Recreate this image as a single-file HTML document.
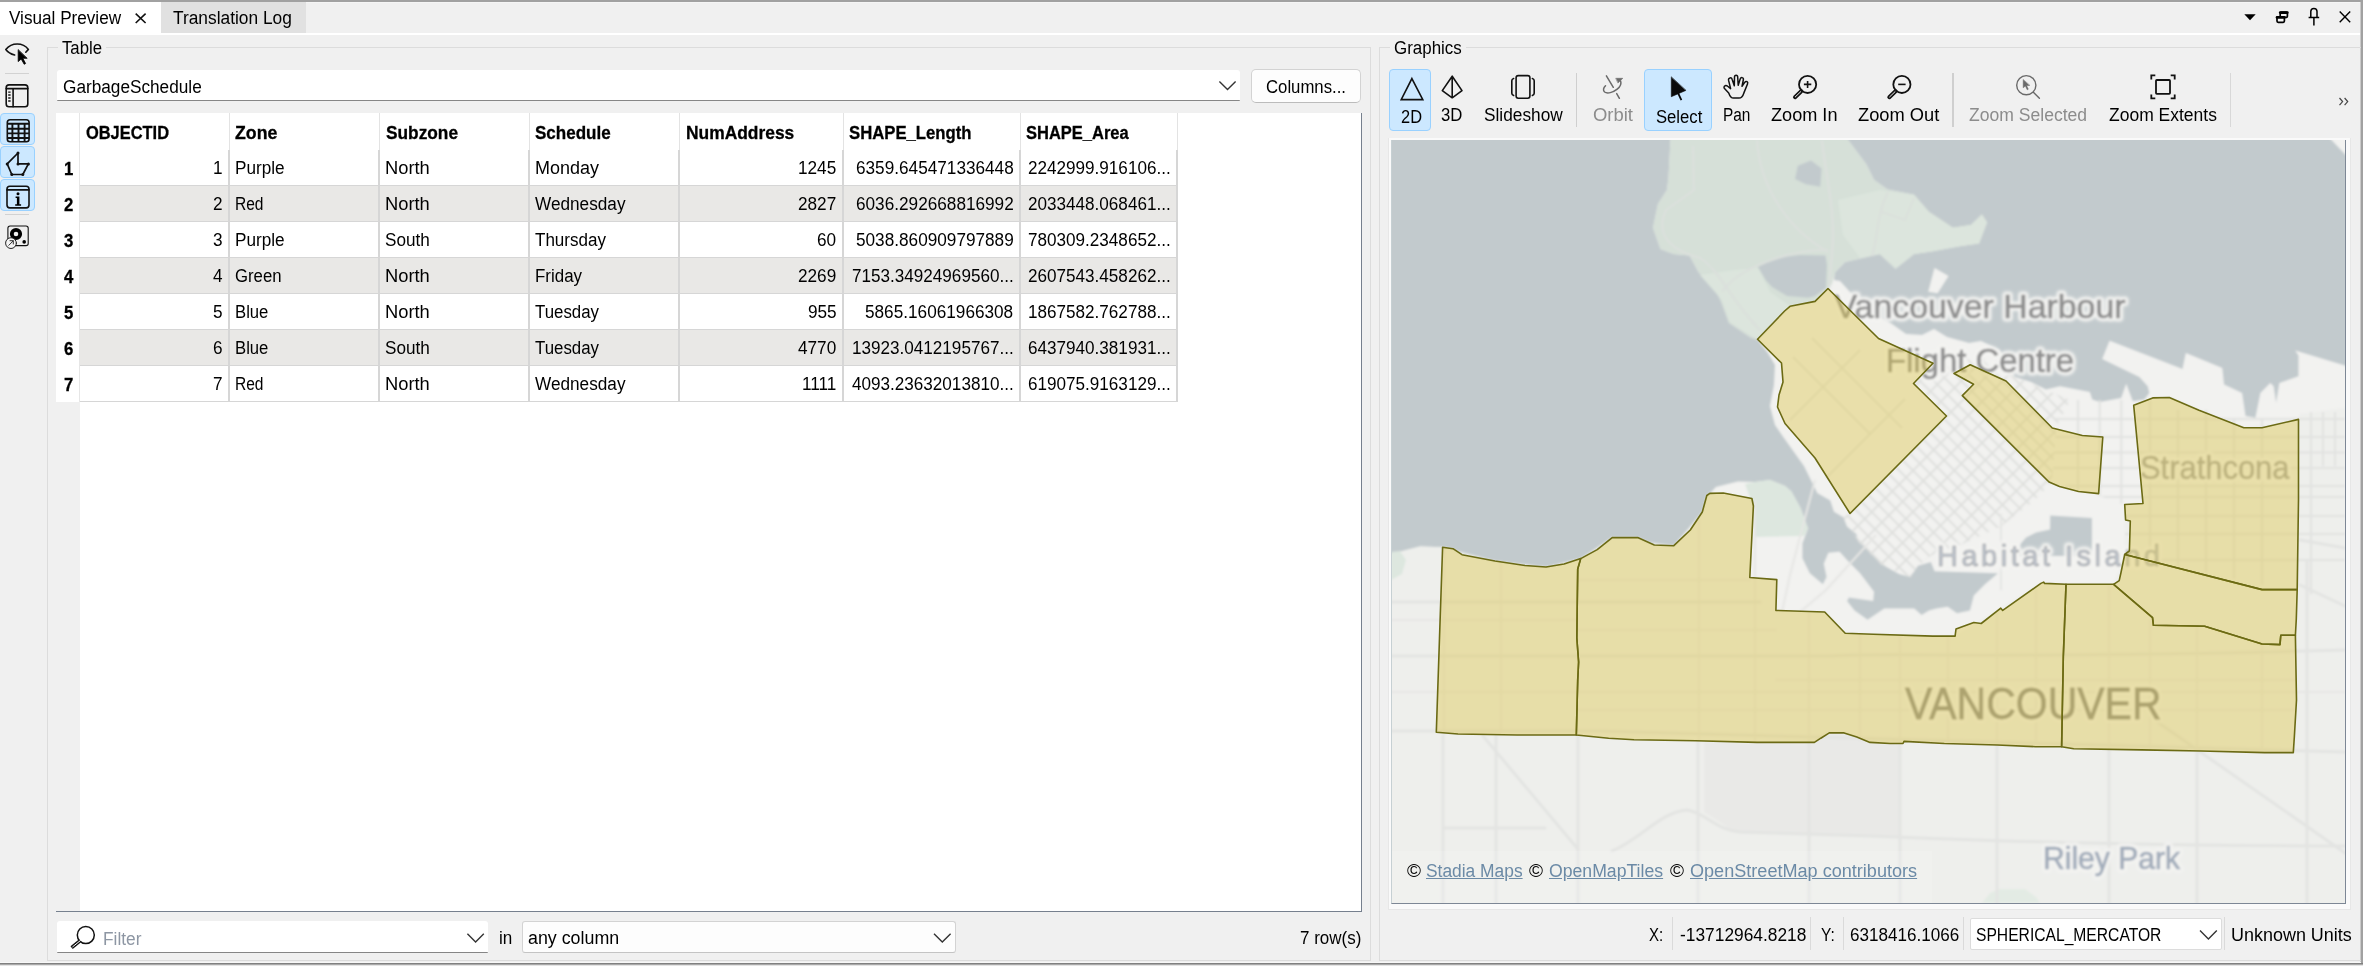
<!DOCTYPE html>
<html lang="en">
<head>
<meta charset="utf-8">
<title>Visual Preview</title>
<style>
html,body{margin:0;padding:0;background:#f0f0f0;}
body{width:2363px;height:966px;overflow:hidden;font-family:"Liberation Sans",sans-serif;}
#root{position:relative;width:2363px;height:966px;overflow:hidden;background:#f0f0f0;}
.a{position:absolute;box-sizing:border-box;}
.t{position:absolute;white-space:pre;font-family:"Liberation Sans",sans-serif;font-size:18px;line-height:1;transform-origin:0 0;color:#000;}
.hl{position:absolute;box-sizing:border-box;background:#cce8ff;border:1px solid #99d1ff;border-radius:4px;}
.vsep{position:absolute;width:1px;background:#d2d2d2;}
.hsep{position:absolute;height:1px;background:#d2d2d2;}
.gl{position:absolute;background:#d6d6d6;}
svg{position:absolute;overflow:visible;}
</style>
</head>
<body>
<div id="root">
<!-- window frame -->
<div class="a" style="left:0;top:0;width:2363px;height:2px;background:#a1a1a1"></div>
<div class="a" style="left:0;top:2px;width:2361px;height:1px;background:#f5f5f5"></div>
<div class="a" style="left:2360px;top:2px;width:1px;height:961px;background:#cbcbcb"></div>
<div class="a" style="left:2361px;top:0;width:2px;height:966px;background:#a1a1a1"></div>
<div class="a" style="left:0;top:962px;width:2361px;height:1px;background:#f8f8f8"></div>
<div class="a" style="left:0;top:963px;width:2363px;height:1px;background:#808080"></div>
<div class="a" style="left:0;top:964px;width:2363px;height:1px;background:#a9a9a9"></div>
<div class="a" style="left:0;top:965px;width:2363px;height:1px;background:#e4e4e4"></div>
<!-- tab bar -->
<div class="a" style="left:0;top:2px;width:161px;height:33px;background:#fff"></div>
<div class="a" style="left:161px;top:2px;width:145px;height:31px;background:#e1e1e1"></div>
<div class="a" style="left:0;top:33px;width:2360px;height:2px;background:#fff"></div>
<!-- left toolbar -->
<div class="hsep" style="left:5px;top:73px;width:24px"></div>
<div class="hl" style="left:0px;top:113px;width:35px;height:32px"></div>
<div class="hl" style="left:0px;top:146px;width:35px;height:32px"></div>
<div class="hl" style="left:0px;top:179px;width:35px;height:32px"></div>
<div class="hsep" style="left:5px;top:214px;width:24px"></div>
<!-- Table group box -->
<div class="a" style="left:47px;top:47px;width:1324px;height:914px;border:1px solid #dcdcdc"></div>
<div class="a" style="left:58px;top:40px;width:48px;height:16px;background:#f0f0f0"></div>
<!-- feature type combo -->
<div class="a" style="left:57px;top:70px;width:1183px;height:31px;background:#fff;border-bottom:1px solid #868686;border-radius:3px 3px 1px 1px"></div>
<!-- Columns button -->
<div class="a" style="left:1251px;top:69px;width:110px;height:34px;background:#fdfdfd;border:1px solid #d3d3d3;border-bottom-color:#bcbcbc;border-radius:5px"></div>
<!-- table view -->
<div class="a" style="left:56px;top:113px;width:1306px;height:799px;background:#fff;border-right:1px solid #76808e;border-bottom:1px solid #76808e"></div>
<div class="a" style="left:56px;top:402px;width:24px;height:509px;background:#f0f0f0"></div>
<!-- alt rows -->
<div class="a" style="left:80px;top:186px;width:1097px;height:35px;background:#e9e8e6"></div>
<div class="a" style="left:80px;top:258px;width:1097px;height:35px;background:#e9e8e6"></div>
<div class="a" style="left:80px;top:330px;width:1097px;height:35px;background:#e9e8e6"></div>
<!-- horizontal gridlines -->
<div class="gl" style="left:80px;top:185px;width:1098px;height:1px"></div>
<div class="gl" style="left:80px;top:221px;width:1098px;height:1px"></div>
<div class="gl" style="left:80px;top:257px;width:1098px;height:1px"></div>
<div class="gl" style="left:80px;top:293px;width:1098px;height:1px"></div>
<div class="gl" style="left:80px;top:329px;width:1098px;height:1px"></div>
<div class="gl" style="left:80px;top:365px;width:1098px;height:1px"></div>
<div class="gl" style="left:80px;top:401px;width:1098px;height:1px"></div>
<!-- header separators (light) -->
<div class="a" style="left:79px;top:113px;width:1px;height:289px;background:#e6e6e6"></div>
<div class="a" style="left:229px;top:113px;width:1px;height:37px;background:#e3e3e3"></div>
<div class="a" style="left:379px;top:113px;width:1px;height:37px;background:#e3e3e3"></div>
<div class="a" style="left:529px;top:113px;width:1px;height:37px;background:#e3e3e3"></div>
<div class="a" style="left:679px;top:113px;width:1px;height:37px;background:#e3e3e3"></div>
<div class="a" style="left:843px;top:113px;width:1px;height:37px;background:#e3e3e3"></div>
<div class="a" style="left:1020px;top:113px;width:1px;height:37px;background:#e3e3e3"></div>
<div class="a" style="left:1177px;top:113px;width:1px;height:37px;background:#e3e3e3"></div>
<!-- vertical gridlines in data -->
<div class="gl" style="left:228px;top:150px;width:2px;height:252px"></div>
<div class="gl" style="left:378px;top:150px;width:2px;height:252px"></div>
<div class="gl" style="left:528px;top:150px;width:2px;height:252px"></div>
<div class="gl" style="left:678px;top:150px;width:2px;height:252px"></div>
<div class="gl" style="left:842px;top:150px;width:2px;height:252px"></div>
<div class="gl" style="left:1019px;top:150px;width:2px;height:252px"></div>
<div class="gl" style="left:1176px;top:150px;width:2px;height:252px"></div>
<!-- filter row -->
<div class="a" style="left:57px;top:921px;width:431px;height:32px;background:#fff;border-bottom:1px solid #868686;border-radius:3px 3px 1px 1px"></div>
<div class="a" style="left:522px;top:921px;width:434px;height:32px;background:#fdfdfd;border:1px solid #d3d3d3;border-bottom-color:#c4c4c4;border-radius:3px"></div>
<!-- Graphics group box -->
<div class="a" style="left:1379px;top:47px;width:982px;height:914px;border:1px solid #dcdcdc;border-right:none"></div>
<div class="a" style="left:1390px;top:40px;width:76px;height:16px;background:#f0f0f0"></div>
<!-- graphics toolbar -->
<div class="hl" style="left:1389px;top:69px;width:42px;height:62px"></div>
<div class="hl" style="left:1644px;top:69px;width:68px;height:62px"></div>
<div class="a" style="left:1576px;top:73px;width:1px;height:54px;background:#cfcfcf"></div>
<div class="a" style="left:1952px;top:73px;width:2px;height:54px;background:#cfcfcf"></div>
<div class="a" style="left:2230px;top:73px;width:1px;height:54px;background:#d8d8d8"></div>
<!-- map frame -->
<div class="a" style="left:1388px;top:138px;width:963px;height:772px;background:#fafafa;border:1px solid #e7e7e7;border-top:none"></div>
<!-- status bar -->
<div class="a" style="left:1672px;top:917px;width:1px;height:33px;background:#dadada"></div>
<div class="a" style="left:1810px;top:917px;width:1px;height:33px;background:#dadada"></div>
<div class="a" style="left:1843px;top:917px;width:1px;height:33px;background:#dadada"></div>
<div class="a" style="left:1963px;top:917px;width:1px;height:33px;background:#dadada"></div>
<div class="a" style="left:2224px;top:917px;width:1px;height:33px;background:#dadada"></div>
<div class="a" style="left:1970px;top:918px;width:252px;height:32px;background:#fff;border:1px solid #dcdcdc;border-radius:2px"></div>
<!-- map -->
<div class="a" style="left:1391px;top:140px;width:955px;height:764px;overflow:hidden;background:#f2f2f0;border-left:1px solid #c6d0d3;border-right:1px solid #7d8795;border-bottom:1px solid #7d8795">
<svg width="954" height="763" viewBox="1391 140 954 763" style="left:-1px;top:0" font-family="Liberation Sans, sans-serif">
<defs>
<clipPath id="cpDT"><path d="M1851,513 L1947,416 L1913,384 L1933,364 L1945,352 L1975,356 L2000,362 L2015,377 L2046,390 L2070,400 L2056,428 L2052,482 L2035,500 L2000,527 L1960,545 L1930,556 L1918,566 L1910,577 L1880,564 L1858,541 L1843,517 Z"/></clipPath>
<clipPath id="cpE"><path d="M2056,400 L2345,368 L2345,600 L2297,592 L2125,555 L2125,505 L2100,496 L2052,482 L2056,428 Z"/></clipPath>
<filter id="blr" x="-2%" y="-2%" width="104%" height="104%"><feGaussianBlur stdDeviation="0.9"/></filter>
<filter id="halo" x="-5%" y="-30%" width="110%" height="160%"><feGaussianBlur stdDeviation="1.1"/></filter>
</defs>
<g filter="url(#blr)">
<!-- water base -->
<rect x="1380" y="130" width="980" height="790" fill="#c2cacd"/>
<!-- land -->
<path fill="#f2f2f0" d="M1380,556 L1391,554 L1420,546.6 L1442.6,547.2 L1453,548.7 L1462,554.7 L1495,561 L1525,565.5 L1546,567 L1564,564 L1580.7,558.6 L1597.2,549.6 L1612.2,537.6 L1637.7,537.6 L1654.3,545 L1673.8,545.7 L1690.3,530 L1702.3,512 L1706.8,495.5 L1709.8,493.4 L1716,487 L1738,481.5 L1755,482 L1770,480 L1785,486 L1791.2,491.2 L1800.5,508 L1808,528.4 L1802.4,543.3 L1802.4,558.3 L1809.8,573.2 L1822.9,584.3 L1826.6,576.9 L1823.8,563.8 L1828.4,552.7 L1839.6,551.7 L1847,560 L1860,573.2 L1874,591.8 L1873.2,601 L1849,597.4 L1847,601 L1854.5,610.4 L1867.6,619.7 L1884.3,608.6 L1914.2,608.6 L1921.6,615 L1929,610.4 L1936.5,608.6 L1947.7,606.7 L1957,613.2 L1970,610.4 L1973.8,595.5 L1985,584.3 L1998,573.2 L1934.6,571.3 L1930.9,562 L1917.9,565.7 L1910.4,576.9 L1899.2,574 L1880.6,563.8 L1873.2,554.5 L1858.3,541.5 L1856.4,534 L1847,526.6 L1843.4,517.3 L1834,511.7 L1830.3,500.5 L1817.3,493 L1804,466 L1784,438 L1775,425 L1770,406 L1774,385 L1775,365 L1768,353 L1758,340 L1750,337 L1729,322.7 L1721.2,301.6 L1713.3,285.8 L1698.8,272.6 L1689.6,255.4 L1673.7,254 L1660.5,248.9 L1653,227.7 L1658,204 L1667,190 L1668.5,177.6 L1671,130 L1842,130 L1848,140 L1866.4,164.4 L1874,180 L1887.5,189.5 L1914,194.7 L1929,212 L1952.8,227.7 L1971,225 L1981.8,214.5 L1987,222.4 L1979,243.5 L1960.7,246 L1931.7,251.5 L1914,254 L1895.5,268.7 L1879.7,254 L1845,262 L1834.8,272.6 L1834,280 L1840,281 L1850,292 L1870,312 L1892,324 L1906,334 L1922,335 L1934,329 L1947,337 L1969,343 L1981,341 L2000,350 L2008,368 L2015,377 L2031,382 L2046,389.6 L2060,386.3 L2089.8,392 L2092.2,399.5 L2099.7,402 L2121.2,397.9 L2126.2,383.8 L2132.8,401.2 L2144.4,399.5 L2149.4,392.9 L2147.7,386.3 L2139.4,377.1 L2102.2,358.9 L2109.6,340.7 L2182.5,368.9 L2185.8,353.1 L2222.3,368 L2224,384.6 L2242.1,392.9 L2245.5,416.1 L2255.4,417.7 L2260.4,392.9 L2270.3,382.9 L2273.6,386.3 L2276.1,402.8 L2279.4,382.9 L2298.5,376.3 L2298.5,355.6 L2295.2,350.6 L2360,370 L2360,920 L1380,920 Z"/>
<path fill="#f2f2f0" d="M2322,130 L2360,130 L2360,170 Z"/>
<!-- small piers -->
<path fill="#f2f2f0" d="M1934.5,268 L1948.5,276 L1937.6,293.3 L1928.3,291.7 Z"/>
<!-- residential tint (south + east) -->
<path fill="#eeefec" d="M1380,556 L1391,554 L1420,546.6 L1442.6,547.2 L1495,561 L1546,567 L1580.7,558.6 L1612.2,537.6 L1673.8,545.7 L1702.3,512 L1709.8,493.4 L1751.9,498.5 L1749.8,577.5 L1776.8,579.6 L1775.9,610.4 L1824.7,612 L1845.2,633.2 L1955.1,636.1 L2000.8,608.2 L2040.9,583.4 L2113.6,584.3 L2124.7,554.5 L2125,505 L2143,503 L2134,405 L2170,397 L2243.8,427.7 L2298.5,419.4 L2300,414 L2360,406 L2360,920 L1380,920 Z"/>
<!-- Stanley Park -->
<path fill="#d6e0d8" d="M1758,340 L1750,337 L1729,322.7 L1721.2,301.6 L1713.3,285.8 L1698.8,272.6 L1689.6,255.4 L1673.7,254 L1660.5,248.9 L1653,227.7 L1658,204 L1667,190 L1668.5,177.6 L1671,130 L1842,130 L1848,140 L1866.4,164.4 L1874,180 L1887.5,189.5 L1914,194.7 L1929,212 L1952.8,227.7 L1971,225 L1981.8,214.5 L1987,222.4 L1979,243.5 L1960.7,246 L1931.7,251.5 L1914,254 L1895.5,268.7 L1879.7,254 L1845,262 L1834.8,272.6 L1832,284 L1815,301.4 L1790,306.3 L1784.6,311 Z"/>
<!-- lighter park patches -->
<path fill="#dce5dd" d="M1700,275 L1722,300 L1730,322 L1758,340 L1784,311 L1790,306 L1770,292 L1758,268 L1735,270 Z"/>
<path fill="#dce5dd" d="M1838,200 L1880,190 L1914,195 L1929,212 L1953,228 L1971,225 L1982,215 L1987,222 L1979,243 L1932,251 L1914,254 L1896,268 L1880,254 L1860,258 L1843,235 Z"/>
<!-- Lost Lagoon, Beaver Lake -->
<path fill="#c2cacd" d="M1758,267 L1775,258 L1800,255 L1825.5,255.5 L1827,265 L1826,288 L1815,296 L1808,297.7 L1787,296 L1772,287 L1766,280.5 Z"/>
<path fill="#c2cacd" d="M1795,179 L1797.8,165.7 L1811,160.4 L1821.6,168.4 L1820.3,186.8 L1805.8,184.2 Z"/>
<!-- park roads / causeway -->
<path fill="none" stroke="#dbe0dc" stroke-width="3" d="M1822,140 C1826,180 1836,210 1832,254 L1829,288"/>
<path fill="none" stroke="#dbe0dc" stroke-width="2.5" d="M1757,140 C1760,190 1790,230 1828,252"/>
<path fill="none" stroke="#dbe0dc" stroke-width="2.5" d="M1693,146 L1694,190 L1666,210 C1655,235 1670,250 1700,258 C1720,270 1730,300 1760,330"/>
<path fill="none" stroke="#dbe0dc" stroke-width="2.5" d="M1722,292 C1738,268 1790,249 1828,250"/>
<path fill="none" stroke="#dbe0dc" stroke-width="2.5" d="M1888,192 C1876,215 1878,240 1872,256"/>
<path fill="none" stroke="#dbe0dc" stroke-width="2" d="M1882,212 L1905,220 L1914,198"/>
<!-- Vanier Park, misc greens -->
<path fill="#dde7df" d="M1745,484 L1755,482 L1770,480 L1785,486 L1791.2,491.2 L1800.5,508 L1808,528.4 L1804,536 L1754,537 L1753,506 Z"/>
<path fill="#dde7df" d="M1391,552 L1400,551 L1406,560 L1402,574 L1391,580 Z"/>
<path fill="#e3ebe4" d="M1982,903 L1990,893 L2000,889 L2025,889 L2036,897 L2040,903 Z"/>
<path fill="#e9e9e7" d="M1704,742 L1812,744 L1826,733 L1846,733 L1870,742 L1900,744 L1900,836 L1735,832 L1704,812 Z"/>
<!-- East False Creek basin -->
<path fill="#c2cacd" d="M2050.2,515.4 L2092,518 L2092,556 L2019,556 L2020.5,544 L2026,537.5 L2036,532.5 L2050,529.5 Z"/>
<!-- downtown diagonal street grid -->
<g clip-path="url(#cpDT)" stroke="#dfe0de" stroke-width="2" fill="none">
<path d="M1463.1,200 l500,500 M1476.9,200 l500,500 M1490.7,200 l500,500 M1504.5,200 l500,500 M1518.3,200 l500,500 M1532.1,200 l500,500 M1545.9,200 l500,500 M1559.7,200 l500,500 M1573.5,200 l500,500 M1587.3,200 l500,500 M1601.1,200 l500,500 M1614.9,200 l500,500 M1628.7,200 l500,500 M1642.5,200 l500,500 M1656.3,200 l500,500 M1670.1,200 l500,500 M1683.9,200 l500,500 M1697.7,200 l500,500 M1711.5,200 l500,500 M1725.3,200 l500,500 M1739.1,200 l500,500 M1752.9,200 l500,500 M1766.7,200 l500,500 M1780.5,200 l500,500 M1794.3,200 l500,500 M1808.1,200 l500,500 M1821.9,200 l500,500 M1835.7,200 l500,500 M1849.5,200 l500,500 M1863.3,200 l500,500 M1877.1,200 l500,500 M1890.9,200 l500,500 M1904.7,200 l500,500 M1918.5,200 l500,500 M1932.3,200 l500,500 M1946.1,200 l500,500"/>
<path d="M1977.6,200 l-500,500 M1998.2,200 l-500,500 M2018.8,200 l-500,500 M2039.4,200 l-500,500 M2060.0,200 l-500,500 M2080.6,200 l-500,500 M2101.2,200 l-500,500 M2121.8,200 l-500,500 M2142.4,200 l-500,500 M2163.0,200 l-500,500 M2183.6,200 l-500,500 M2204.2,200 l-500,500 M2224.8,200 l-500,500 M2245.4,200 l-500,500 M2266.0,200 l-500,500 M2286.6,200 l-500,500 M2307.2,200 l-500,500 M2327.8,200 l-500,500 M2348.4,200 l-500,500 M2369.0,200 l-500,500 M2389.6,200 l-500,500 M2410.2,200 l-500,500 M2430.8,200 l-500,500 M2451.4,200 l-500,500 M2472.0,200 l-500,500"/>
</g>
<!-- east side orthogonal grid -->
<g clip-path="url(#cpE)" stroke="#e1e2e0" stroke-width="2" fill="none">
<path d="M2040,419 H2345 M2040,437 H2345 M2040,452.6 H2345 M2040,468 H2345 M2040,486 H2345 M2040,497 H2345 M2100,516 H2345 M2100,534 H2345 M2125,560 H2345"/>
<path d="M2078,400 V490 M2099.7,400 V500 M2121.3,400 V520 M2150,400 V560 M2178,410 V570 M2206,410 V580 M2234,420 V590 M2262,420 V600 M2311,412 V640 M2323,412 V466 M2335,412 V466"/>
</g>
<!-- southern road network -->
<g stroke="#e3e4e2" stroke-width="3" fill="none" stroke-linecap="round">
<path d="M1391,602 H1760 M1391,656 H1830 C1900,652 1990,660 2345,650 M1391,731 H1600 L2345,752 M1443,736 V903 M1496,736 V903 M1443,828 H1545 M1578,736 V903 M1698,742 V903 M1809,742 V903 M1900,745 V903 M1997,745 V903 M2109,750 V903 M2197,752 V903 M2307,560 V903"/>
<path d="M1483,736 L1577,848 M1612,851 C1640,840 1660,812 1687,810 C1705,812 1715,830 1740,832 L1870,836 C2000,842 2200,846 2345,846"/>
<path d="M2156,721 L2345,853 M2300,585 L2345,606 M2300,540 L2345,548"/>
</g>
<g stroke="#e6e6e4" stroke-width="2" fill="none">
<path d="M1444,548 V736 M1501,562 V736 M1699,520 V742 M1755,500 V742 M1809,612 V742 M1860,634 V742 M1900,636 V745 M1948,636 V745 M1997,612 V745 M2036,590 V745 M2109,585 V750 M2150,620 V750 M2197,626 V752 M2262,644 V752"/>
<path d="M1391,620 H1577 M1391,692 H2345 M1577,580 H1750 M1577,630 H1776 M1776,680 H2296 M1577,710 H2296"/>
<path d="M1815,480 L1790,575 L1782,612 M1876,535 L1826,590 L1800,612"/>
</g>
<g stroke="#e2e3e1" stroke-width="2" fill="none">
<path d="M1793,357 L1870,434 M1812,338 L1902,428 M1790,420 L1860,350 M1826,478 L1905,399"/>
<path d="M2001,514 V590" stroke="#e4e5e3"/>
</g>
<!-- labels (base map, blurred) -->
<g font-size="33" fill="#f4f4f2" stroke="#f4f4f2" stroke-width="7" stroke-linejoin="round" filter="url(#halo)" opacity="0.95">
<text x="1834.5" y="317.5" textLength="291" lengthAdjust="spacingAndGlyphs">Vancouver Harbour</text>
<text x="1886" y="371.5" textLength="188" lengthAdjust="spacingAndGlyphs">Flight Centre</text>
<text x="2140" y="479" textLength="149.5" lengthAdjust="spacingAndGlyphs">Strathcona</text>
<text x="2043" y="868.7" font-size="32" textLength="137" lengthAdjust="spacingAndGlyphs">Riley Park</text>
<text x="1937" y="565.6" font-size="29" textLength="223" lengthAdjust="spacing">Habitat Island</text>
<text x="1905" y="718.5" font-size="45" textLength="256.5" lengthAdjust="spacingAndGlyphs">VANCOUVER</text>
</g>
<g font-size="33" fill="#8f8f8f" stroke="#8f8f8f" stroke-width="0.6">
<text x="1834.5" y="317.5" textLength="291" lengthAdjust="spacingAndGlyphs">Vancouver Harbour</text>
<text x="1886" y="371.5" textLength="188" lengthAdjust="spacingAndGlyphs">Flight Centre</text>
<text x="2140" y="479" textLength="149.5" lengthAdjust="spacingAndGlyphs" fill="#a4a4a4" stroke="#a4a4a4">Strathcona</text>
<text x="2043" y="868.7" font-size="32" textLength="137" lengthAdjust="spacingAndGlyphs" fill="#a3adbb" stroke="#a3adbb" stroke-width="0.7">Riley Park</text>
<text x="1937" y="565.6" font-size="29" textLength="223" lengthAdjust="spacing" fill="#c1c8d2">Habitat Island</text>
<text x="1905" y="718.5" font-size="45" textLength="256.5" lengthAdjust="spacingAndGlyphs" fill="#8a8a8a" stroke="#8a8a8a" stroke-width="0.9">VANCOUVER</text>
</g>
</g>
<!-- feature polygons (vector overlay) -->
<g fill="rgba(222,198,75,0.42)" stroke="#6b6a14" stroke-width="1.6" stroke-linejoin="round">
<path d="M1828,288.5 L1878.5,338.5 L1933,363.3 L1913.5,383.5 L1946.5,416 L1850,513.5 L1815,458 L1785,423.5 L1777.5,407 L1779,395 L1783,382 L1781.5,363 L1757.5,339.2 L1784.6,311 L1790,306.3 L1815,301.4 Z"/>
<path d="M1970.2,364.7 L2006,381 L2052.3,428 L2082.3,435.5 L2102.8,437 L2098.6,493.6 L2078.5,491.5 L2059.5,486.5 L2049,482 L1962.3,395.6 L1973.6,384.3 L1954,373.5 Z"/>
<path d="M2133.7,405.3 L2152.7,397.9 L2169.3,397.5 L2199,410.3 L2243.8,427.7 L2262,427.7 L2298.5,419.4 L2298.5,500 L2297.2,589.6 L2262,589.6 L2124.7,554.5 L2129.4,550.8 L2130.3,521 L2125.6,520 L2124.7,504.5 L2143,503.5 L2136,429.3 Z"/>
<path d="M2124.7,554.5 L2262,589.6 L2297.2,589.6 L2296.3,619 L2295.4,635.3 L2280.8,635.3 L2280,644.6 L2262,644 L2204.6,626.3 L2153.4,625.3 L2152.5,617.6 L2113.6,584.3 L2119.2,580.6 L2121,572.5 Z"/>
<path d="M2066,584.2 L2113.6,584.3 L2152.5,617.6 L2153.4,625.3 L2204.6,626.3 L2262,644 L2280,644.6 L2280.8,635.3 L2295.4,635.3 L2296.5,700 L2294.4,736 L2293.3,752.6 L2264.7,752.6 L2201,751 L2141.6,749.9 L2073.7,748.8 L2061.6,746.7 L2063.3,656.4 Z"/>
<path d="M1580.7,558.6 L1597.2,549.6 L1612.2,537.6 L1637.7,537.6 L1654.3,545 L1673.8,545.7 L1690.3,530 L1702.3,512 L1706.8,495.5 L1709.8,493.4 L1723.3,493 L1751.9,498.5 L1753.4,506 L1749.8,577.5 L1776.8,579.6 L1775.9,610.4 L1824.7,612 L1845.2,633.2 L1873.2,634.3 L1932.8,636.1 L1955.1,636.1 L1956,629 L1973.8,622.5 L1981.2,623.5 L2000.8,608.2 L2002.7,610.4 L2040.9,583.4 L2043.6,582.1 L2044.6,583.4 L2066,584.2 L2063.3,656.4 L2061.6,746.7 L2035.5,746.7 L1997.3,745 L1944.3,743.5 L1904,741.4 L1903,743.5 L1890,743.5 L1870,742.4 L1856.8,737.1 L1844.1,732.9 L1829.3,732.9 L1820.8,738.2 L1814.4,742.4 L1757.1,742.4 L1695.6,740.7 L1634,739.7 L1608.6,738.2 L1576.3,735 L1577.7,680 L1578.6,662 L1576.8,638 L1577.7,569 Z"/>
<path d="M1442.6,547.2 L1453,548.7 L1462,554.7 L1495,561 L1525,565.5 L1546,567 L1564,564 L1580.7,558.6 L1577.7,569 L1576.8,638 L1578.6,662 L1577.7,680 L1576.3,735 L1517.3,735 L1458,734 L1436.3,732.3 L1439.5,638 Z"/>
</g>
<!-- attribution -->
<rect x="1391" y="851" width="541" height="52" fill="rgba(252,252,252,0.15)"/>
</svg>
</div>
<!-- icons -->
<svg width="2363" height="966" viewBox="0 0 2363 966" style="left:0;top:0;pointer-events:none" fill="none" stroke="#111" stroke-width="1.6" stroke-linecap="round" stroke-linejoin="round">
<!-- tab close -->
<path d="M135.7,13.6 L145.6,23 M145.6,13.6 L135.7,23" stroke-width="1.6" stroke-linecap="butt"/>
<!-- title bar buttons -->
<path d="M2244.3,14.2 L2255.7,14.2 L2250,20.2 Z" fill="#000" stroke="none"/>
<g stroke="#000" stroke-width="1.7">
<rect x="2280.2" y="12" width="7.2" height="5.4" rx="1.2" fill="#f0f0f0"/>
<path d="M2280.2,12.6 H2287.4" stroke-width="2.6"/>
<rect x="2277" y="16.8" width="7.4" height="5.5" rx="1.2" fill="#f6f6f6"/>
<path d="M2277,17.4 H2284.4" stroke-width="2.6"/>
</g>
<path d="M2310.8,17.6 V11.6 A3.1,3.1 0 0 1 2317,11.6 V17.6 M2308.6,17.6 H2319.2 M2313.9,17.6 V25.4" stroke="#000" stroke-width="1.5" stroke-linecap="butt"/>
<path d="M2339.7,11.6 L2350.2,22.3 M2350.2,11.6 L2339.7,22.3" stroke="#000" stroke-width="1.4" stroke-linecap="butt"/>
<!-- left toolbar: eye + cursor -->
<path d="M14.6,55 C10.5,54 7.5,51.8 5.8,49.5 C9,45.5 13,44 17.2,44 C21.5,44 25.5,45.6 28.4,49.4 L25.8,52.2"/>
<path d="M18.2,50 L18.2,61.6 L21.2,59 L24.2,64.3 L25.6,63.5 L22.8,58.3 L26.8,58.3 Z" fill="#000" stroke="#000" stroke-width="0.8"/>
<!-- panel icon -->
<rect x="6.2" y="84.9" width="21.6" height="21.9" rx="2.8"/>
<path d="M6.2,88.6 H27.8 M13.1,88.6 V106.8"/>
<path d="M8.2,92.1 H10.6 M8.2,95 H10.6 M8.2,98 H10.6 M8.2,101 H10.6" stroke-width="1.4" stroke-linecap="butt"/>
<!-- table icon -->
<rect x="7.3" y="119.8" width="21.8" height="22" rx="2.8"/>
<path d="M7.3,123.8 H29.1 M7.3,128.8 H29.1 M7.3,133.4 H29.1 M7.3,138 H29.1 M12.4,123.8 V141.8 M18.5,123.8 V141.8 M24.6,123.8 V141.8" stroke-width="1.9" stroke-linecap="butt"/>
<!-- polygon icon -->
<path d="M7.2,163.9 L18,153 L18,163.9 L28.4,163.9 L22.8,174.5 L11.8,174.5 Z" stroke-width="1.7"/>
<g fill="#111" stroke="none"><circle cx="7.2" cy="163.9" r="1.5"/><circle cx="18" cy="153" r="1.5"/><circle cx="18" cy="163.9" r="1.5"/><circle cx="28.4" cy="163.9" r="1.5"/><circle cx="22.8" cy="174.5" r="1.5"/><circle cx="11.8" cy="174.5" r="1.5"/></g>
<!-- info icon -->
<rect x="7" y="186.3" width="22" height="21.6" rx="2.8"/>
<path d="M7,189.9 H29"/>
<g fill="#000" stroke="none"><circle cx="18" cy="193.8" r="1.5"/><path d="M15.6,196.6 H19.4 V204.2 H21.1 V205.7 H15.2 V204.2 H16.9 V198.1 H15.6 Z"/></g>
<!-- disk/shortcut icon -->
<rect x="7.9" y="226" width="20.3" height="19.6" rx="2.2" stroke-width="1.1"/>
<circle cx="16" cy="234" r="4.2" stroke="#000" stroke-width="3.8"/>
<circle cx="24.2" cy="241.9" r="1.8" fill="#000" stroke="none"/>
<circle cx="11" cy="243.1" r="5.4" fill="#f4f4f4" stroke="#222" stroke-width="1"/>
<path d="M8.8,245.3 L13.2,240.9 M10,240.7 H13.3 V244" stroke="#333" stroke-width="1"/>
<!-- combo chevrons -->
<g stroke="#333" stroke-width="1.4" stroke-linecap="butt" stroke-linejoin="miter">
<path d="M1219.4,81.6 L1227.5,89.6 L1235.6,81.6"/>
<path d="M467.4,933.8 L475.6,942 L483.8,933.8"/>
<path d="M934,933.8 L942.3,942 L950.6,933.8"/>
<path d="M2200,930.6 L2208.4,938.9 L2216.8,930.6"/>
</g>
<!-- filter magnifier -->
<circle cx="85.8" cy="935.1" r="8.5" stroke-width="1.5"/>
<path d="M79.6,941.2 L71.6,947.6" stroke-width="3.6" stroke-linecap="butt"/>
<path d="M80.6,940.4 L72.4,947" stroke="#fff" stroke-width="1" stroke-linecap="butt"/>
<!-- 2D triangle -->
<path d="M1411.9,78.6 L1422.8,99.6 L1401.2,99.6 Z" stroke-linejoin="miter" stroke-width="1.6"/>
<!-- 3D -->
<path d="M1452.2,76.2 L1462,90.6 L1452.2,97.8 L1442.3,90.6 Z M1452.2,76.2 V97.8" stroke-width="1.6"/>
<!-- slideshow -->
<rect x="1516.1" y="75.6" width="13.8" height="22.7" rx="2.2"/>
<path d="M1513.6,78.5 C1512.4,78.9 1511.8,79.6 1511.8,80.8 V93.3 C1511.8,94.4 1512.4,95 1513.6,95.4 M1532.4,78.5 C1533.6,78.9 1534.2,79.6 1534.2,80.8 V93.3 C1534.2,94.4 1533.6,95 1532.4,95.4"/>
<!-- orbit (disabled) -->
<g stroke="#6a6a6a" stroke-width="1.5">
<path d="M1606.4,75.8 L1613.3,87.3 M1616.7,93.6 L1619.4,98.3"/>
<path d="M1605.5,85.8 C1603.2,88 1602.9,90.6 1604.6,92 C1607.2,94 1613,92.6 1617.2,89.2 C1620.4,86.6 1621.6,83.8 1620.6,81"/>
<path d="M1616.1,78.3 L1622.8,78.3 L1618.2,82.8 Z" fill="#6a6a6a" stroke-width="0.6"/>
</g>
<!-- select cursor -->
<path d="M1671.3,77.2 L1671.3,96.7 L1685.7,90.5 Z" fill="#0a0a0a" stroke="#0a0a0a" stroke-width="0.6" stroke-linejoin="miter"/>
<path d="M1677.4,91.6 L1681.4,100.2" stroke="#0a0a0a" stroke-width="1.8" stroke-linecap="butt"/>
<!-- pan hand -->
<path d="M1728.7,92.9 L1724.5,88.6 C1723.6,87.5 1724,86.2 1725.2,85.7 C1726.3,85.3 1727.2,85.9 1728,86.5 L1730.6,88.6 L1728.6,80.4 C1728.3,79 1729,78.1 1730,77.9 C1731.1,77.7 1731.9,78.4 1732.2,79.5 L1734.3,85.7 L1734.5,77.2 C1734.5,76 1735.2,75.3 1736.1,75.3 C1737,75.3 1737.7,76 1737.7,77.2 L1738.2,85.3 L1740.2,79 C1740.6,77.9 1741.4,77.3 1742.3,77.6 C1743.3,77.9 1743.6,78.8 1743.3,80 L1742,86.3 L1744.7,82.4 C1745.3,81.5 1746.2,81.2 1747,81.7 C1747.8,82.2 1747.9,83.1 1747.5,84 L1743.9,92.9 C1742.8,96.3 1741.5,98.1 1739,98.1 L1733.4,98.1 C1731,98.1 1729.8,96 1728.7,92.9 Z" stroke-width="1.5"/>
<!-- zoom in -->
<circle cx="1807.6" cy="84.4" r="8.6" stroke-width="1.8"/>
<path d="M1803.9,84.4 H1811.3 M1807.6,80.9 V87.9" stroke-width="1.6" stroke-linecap="butt"/>
<path d="M1801.2,91.2 L1795,97.2" stroke-width="4"/>
<path d="M1800.7,91.7 L1795.3,96.9" stroke="#eee" stroke-width="1"/>
<!-- zoom out -->
<circle cx="1901.9" cy="84.4" r="8.6" stroke-width="1.8"/>
<path d="M1898.2,84.4 H1905.6" stroke-width="1.6" stroke-linecap="butt"/>
<path d="M1895.5,91.2 L1889.3,97.2" stroke-width="4"/>
<path d="M1895,91.7 L1889.6,96.9" stroke="#eee" stroke-width="1"/>
<!-- zoom selected (disabled) -->
<g stroke="#696969" stroke-width="1.4">
<circle cx="2026.3" cy="85.2" r="9.6"/>
<path d="M2033.6,92.4 L2039.4,98.2"/>
<path d="M2023.2,79.8 L2023.2,87.8 L2025.4,86 L2027.2,89.8 L2028.3,89.2 L2026.6,85.6 L2029.5,85.4 Z" fill="#696969" stroke-width="0.5"/>
</g>
<!-- zoom extents -->
<g stroke-width="1.8" stroke-linecap="butt" stroke-linejoin="miter">
<rect x="2156" y="80" width="14" height="13.8" rx="0.8"/>
<path d="M2151.3,79.4 V75.4 H2155.3 M2170.7,75.4 H2174.7 V79.4 M2174.7,94.4 V98.4 H2170.7 M2155.3,98.4 H2151.3 V94.4"/>
</g>
<!-- more chevrons -->
<path d="M2339.5,98 L2342.6,101.6 L2339.5,105.2 M2344.6,98 L2347.7,101.6 L2344.6,105.2" stroke="#444" stroke-width="1.2" stroke-linecap="butt" stroke-linejoin="miter"/>
</svg>

<!-- text -->
<span class="t" style="left:9.3px;top:9.0px;transform:scaleX(0.9521);">Visual Preview</span>
<span class="t" style="left:173.2px;top:9.0px;transform:scaleX(0.9626);">Translation Log</span>
<span class="t" style="left:62.0px;top:39.0px;transform:scaleX(0.9296);">Table</span>
<span class="t" style="left:1394.0px;top:39.0px;transform:scaleX(0.9413);">Graphics</span>
<span class="t" style="left:63.3px;top:78.0px;transform:scaleX(0.9558);">GarbageSchedule</span>
<span class="t" style="left:1265.7px;top:78.0px;transform:scaleX(0.9299);">Columns...</span>
<span class="t" style="left:85.5px;top:124.0px;transform:scaleX(0.9119);font-weight:bold;-webkit-text-stroke:0.3px #000;">OBJECTID</span>
<span class="t" style="left:235.4px;top:124.0px;transform:scaleX(0.9837);font-weight:bold;-webkit-text-stroke:0.3px #000;">Zone</span>
<span class="t" style="left:385.5px;top:124.0px;transform:scaleX(0.9600);font-weight:bold;-webkit-text-stroke:0.3px #000;">Subzone</span>
<span class="t" style="left:535.3px;top:124.0px;transform:scaleX(0.9459);font-weight:bold;-webkit-text-stroke:0.3px #000;">Schedule</span>
<span class="t" style="left:686.1px;top:124.0px;transform:scaleX(0.9667);font-weight:bold;-webkit-text-stroke:0.3px #000;">NumAddress</span>
<span class="t" style="left:849.1px;top:124.0px;transform:scaleX(0.9279);font-weight:bold;-webkit-text-stroke:0.3px #000;">SHAPE_Length</span>
<span class="t" style="left:1026.3px;top:124.0px;transform:scaleX(0.9165);font-weight:bold;-webkit-text-stroke:0.3px #000;">SHAPE_Area</span>
<span class="t" style="left:64.2px;top:159.5px;transform:scaleX(0.9300);font-weight:bold;-webkit-text-stroke:0.3px #000;">1</span>
<span class="t" style="left:212.9px;top:159.0px;transform:scaleX(0.9550);">1</span>
<span class="t" style="left:234.8px;top:159.0px;transform:scaleX(0.9533);">Purple</span>
<span class="t" style="left:385.2px;top:159.0px;transform:scaleX(1.0178);">North</span>
<span class="t" style="left:535.0px;top:159.0px;transform:scaleX(0.9993);">Monday</span>
<span class="t" style="left:798.1px;top:159.0px;transform:scaleX(0.9550);">1245</span>
<span class="t" style="left:855.6px;top:159.0px;transform:scaleX(0.9550);">6359.645471336448</span>
<span class="t" style="left:1028.3px;top:159.0px;transform:scaleX(0.9503);">2242999.916106...</span>
<span class="t" style="left:64.2px;top:195.5px;transform:scaleX(0.9300);font-weight:bold;-webkit-text-stroke:0.3px #000;">2</span>
<span class="t" style="left:212.9px;top:195.0px;transform:scaleX(0.9550);">2</span>
<span class="t" style="left:234.8px;top:195.0px;transform:scaleX(0.8628);">Red</span>
<span class="t" style="left:385.2px;top:195.0px;transform:scaleX(1.0178);">North</span>
<span class="t" style="left:535.0px;top:195.0px;transform:scaleX(0.9553);">Wednesday</span>
<span class="t" style="left:798.1px;top:195.0px;transform:scaleX(0.9550);">2827</span>
<span class="t" style="left:855.6px;top:195.0px;transform:scaleX(0.9550);">6036.292668816992</span>
<span class="t" style="left:1028.3px;top:195.0px;transform:scaleX(0.9503);">2033448.068461...</span>
<span class="t" style="left:64.2px;top:231.5px;transform:scaleX(0.9300);font-weight:bold;-webkit-text-stroke:0.3px #000;">3</span>
<span class="t" style="left:212.9px;top:231.0px;transform:scaleX(0.9550);">3</span>
<span class="t" style="left:234.8px;top:231.0px;transform:scaleX(0.9533);">Purple</span>
<span class="t" style="left:385.2px;top:231.0px;transform:scaleX(0.9522);">South</span>
<span class="t" style="left:535.0px;top:231.0px;transform:scaleX(0.9461);">Thursday</span>
<span class="t" style="left:817.2px;top:231.0px;transform:scaleX(0.9550);">60</span>
<span class="t" style="left:855.6px;top:231.0px;transform:scaleX(0.9550);">5038.860909797889</span>
<span class="t" style="left:1028.3px;top:231.0px;transform:scaleX(0.9503);">780309.2348652...</span>
<span class="t" style="left:64.2px;top:267.5px;transform:scaleX(0.9300);font-weight:bold;-webkit-text-stroke:0.3px #000;">4</span>
<span class="t" style="left:212.9px;top:267.0px;transform:scaleX(0.9550);">4</span>
<span class="t" style="left:234.8px;top:267.0px;transform:scaleX(0.9294);">Green</span>
<span class="t" style="left:385.2px;top:267.0px;transform:scaleX(1.0178);">North</span>
<span class="t" style="left:535.0px;top:267.0px;transform:scaleX(0.9397);">Friday</span>
<span class="t" style="left:798.1px;top:267.0px;transform:scaleX(0.9550);">2269</span>
<span class="t" style="left:851.7px;top:267.0px;transform:scaleX(0.9502);">7153.34924969560...</span>
<span class="t" style="left:1028.3px;top:267.0px;transform:scaleX(0.9503);">2607543.458262...</span>
<span class="t" style="left:64.2px;top:303.5px;transform:scaleX(0.9300);font-weight:bold;-webkit-text-stroke:0.3px #000;">5</span>
<span class="t" style="left:212.9px;top:303.0px;transform:scaleX(0.9550);">5</span>
<span class="t" style="left:234.8px;top:303.0px;transform:scaleX(0.9270);">Blue</span>
<span class="t" style="left:385.2px;top:303.0px;transform:scaleX(1.0178);">North</span>
<span class="t" style="left:535.0px;top:303.0px;transform:scaleX(0.9360);">Tuesday</span>
<span class="t" style="left:807.6px;top:303.0px;transform:scaleX(0.9550);">955</span>
<span class="t" style="left:865.2px;top:303.0px;transform:scaleX(0.9550);">5865.16061966308</span>
<span class="t" style="left:1028.3px;top:303.0px;transform:scaleX(0.9503);">1867582.762788...</span>
<span class="t" style="left:64.2px;top:339.5px;transform:scaleX(0.9300);font-weight:bold;-webkit-text-stroke:0.3px #000;">6</span>
<span class="t" style="left:212.9px;top:339.0px;transform:scaleX(0.9550);">6</span>
<span class="t" style="left:234.8px;top:339.0px;transform:scaleX(0.9270);">Blue</span>
<span class="t" style="left:385.2px;top:339.0px;transform:scaleX(0.9522);">South</span>
<span class="t" style="left:535.0px;top:339.0px;transform:scaleX(0.9360);">Tuesday</span>
<span class="t" style="left:798.1px;top:339.0px;transform:scaleX(0.9550);">4770</span>
<span class="t" style="left:851.7px;top:339.0px;transform:scaleX(0.9502);">13923.0412195767...</span>
<span class="t" style="left:1028.3px;top:339.0px;transform:scaleX(0.9503);">6437940.381931...</span>
<span class="t" style="left:64.2px;top:375.5px;transform:scaleX(0.9300);font-weight:bold;-webkit-text-stroke:0.3px #000;">7</span>
<span class="t" style="left:212.9px;top:375.0px;transform:scaleX(0.9550);">7</span>
<span class="t" style="left:234.8px;top:375.0px;transform:scaleX(0.8628);">Red</span>
<span class="t" style="left:385.2px;top:375.0px;transform:scaleX(1.0178);">North</span>
<span class="t" style="left:535.0px;top:375.0px;transform:scaleX(0.9553);">Wednesday</span>
<span class="t" style="left:801.9px;top:375.0px;transform:scaleX(0.9550);">1111</span>
<span class="t" style="left:851.7px;top:375.0px;transform:scaleX(0.9502);">4093.23632013810...</span>
<span class="t" style="left:1028.3px;top:375.0px;transform:scaleX(0.9503);">619075.9163129...</span>
<span class="t" style="left:102.8px;top:930.0px;transform:scaleX(0.9600);color:#8d96a3;">Filter</span>
<span class="t" style="left:498.5px;top:929.0px;transform:scaleX(0.9489);">in</span>
<span class="t" style="left:528.2px;top:929.0px;transform:scaleX(0.9906);">any column</span>
<span class="t" style="left:1299.8px;top:929.0px;transform:scaleX(0.9429);">7 row(s)</span>
<span class="t" style="left:1400.7px;top:108.0px;transform:scaleX(0.9124);">2D</span>
<span class="t" style="left:1441.4px;top:106.0px;transform:scaleX(0.9298);">3D</span>
<span class="t" style="left:1484.0px;top:106.0px;transform:scaleX(0.9592);">Slideshow</span>
<span class="t" style="left:1593.0px;top:106.0px;transform:scaleX(1.0252);color:#8c8c8c;">Orbit</span>
<span class="t" style="left:1656.0px;top:108.0px;transform:scaleX(0.9254);">Select</span>
<span class="t" style="left:1722.6px;top:106.0px;transform:scaleX(0.8554);">Pan</span>
<span class="t" style="left:1771.0px;top:106.0px;transform:scaleX(1.0071);">Zoom In</span>
<span class="t" style="left:1858.4px;top:106.0px;transform:scaleX(1.0159);">Zoom Out</span>
<span class="t" style="left:1969.3px;top:106.0px;transform:scaleX(0.9755);color:#8c8c8c;">Zoom Selected</span>
<span class="t" style="left:2108.7px;top:106.0px;transform:scaleX(0.9717);">Zoom Extents</span>
<span class="t" style="left:1649.0px;top:926.0px;transform:scaleX(0.8345);">X:</span>
<span class="t" style="left:1680.0px;top:926.0px;transform:scaleX(0.9640);">-13712964.8218</span>
<span class="t" style="left:1821.2px;top:926.0px;transform:scaleX(0.8617);">Y:</span>
<span class="t" style="left:1850.1px;top:926.0px;transform:scaleX(0.9494);">6318416.1066</span>
<span class="t" style="left:1975.8px;top:926.0px;transform:scaleX(0.8688);">SPHERICAL_MERCATOR</span>
<span class="t" style="left:2230.8px;top:926.0px;transform:scaleX(0.9978);">Unknown Units</span>
<span class="t" style="left:1406.5px;top:862.0px;transform:scaleX(1.0554);">©</span>
<span class="t" style="left:1426.0px;top:862.0px;transform:scaleX(0.9654);color:#6b8aa6;text-decoration:underline;">Stadia Maps</span>
<span class="t" style="left:1529.0px;top:862.0px;transform:scaleX(1.0554);">©</span>
<span class="t" style="left:1549.2px;top:862.0px;transform:scaleX(0.9803);color:#6b8aa6;text-decoration:underline;">OpenMapTiles</span>
<span class="t" style="left:1670.0px;top:862.0px;transform:scaleX(1.0554);">©</span>
<span class="t" style="left:1689.6px;top:862.0px;transform:scaleX(1.0043);color:#6b8aa6;text-decoration:underline;">OpenStreetMap contributors</span>
</div>
</body>
</html>
